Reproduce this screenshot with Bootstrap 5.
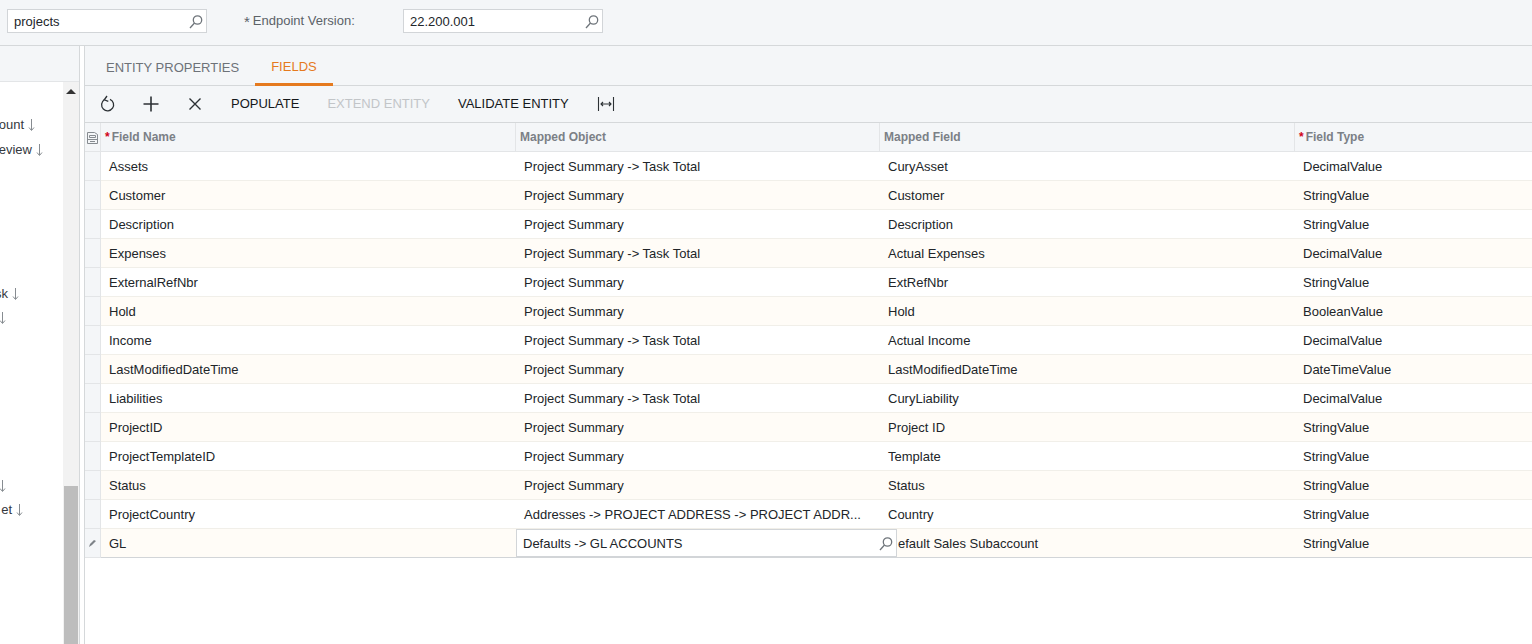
<!DOCTYPE html>
<html lang="en"><head><meta charset="utf-8"><title>Fields</title>
<link href="https://cdn.jsdelivr.net/npm/bootstrap@5.3.0/dist/css/bootstrap.min.css" rel="stylesheet">
<style>
html,body{height:644px;overflow:hidden}
body{font-family:"Liberation Sans",Arial,sans-serif;font-size:13px;color:#22262a;background:#fff}
.topbar{height:46px;background:#f4f6f8;border-bottom:1px solid #d5d8da;padding:9px 0 0 7px}
.lookup{height:24px;background:#fff;border:1px solid #d2d5d8;width:200px;padding:1px 6px 0;line-height:22px}
.lookup svg{width:16px;height:16px;margin-right:-4px}
.ver-label{color:#5b6268;width:196px;padding-left:37px;line-height:23px}
.ver-label i{font-style:normal;margin-right:3px;font-size:15px;vertical-align:-2px}
.mainrow{height:598px}
.leftpane{width:80px;border-right:1px solid #d5d8da;flex:none}
.lefthead{height:36px;background:#f4f6f8;border-bottom:1px solid #e3e5e7}
.leftbody{height:562px}
.treecol{width:63px;padding-top:31px}
.treerow{height:24px;line-height:24px;white-space:nowrap;display:flex;justify-content:flex-end;align-items:center;gap:4px;color:#34393e}
.treerow svg{flex:none;display:block}
.w35{width:35px}.w43{width:43px;margin-top:1px}.w19{width:19px}.w6{width:6px}.w23{width:23px}
.spacer-a{height:120px}.spacer-b{height:144px}
.track{width:16px;background:#f2f2f2;padding-top:404px;position:relative}
.track-up{position:absolute;left:3px;top:7px;width:0;height:0;border-left:5px solid transparent;border-right:5px solid transparent;border-bottom:5px solid #333}
.thumb{height:158px;margin:0 1px;background:#bdbdbd}
.rightpane{margin-left:4px;border-left:1px solid #d5d8da;flex:1;min-width:0}
.tabbar{height:40px;background:#f4f6f8;border-bottom:1px solid #d5d8da;padding-left:5px}
.tabitem{height:40px;line-height:43px;padding:0 16px;color:#6d7278;font-size:13px}
.tabitem.on{color:#e57a1e;border-bottom:3px solid #e57a1e;line-height:41px}
.toolbar{height:37px;background:#f4f6f8;border-bottom:1px solid #d5d8da;padding-left:14px}
.toolbar svg{display:block}
.gap25{margin-right:25px}.gap27{margin-right:27px}.gap28{margin-right:28px}
.tbtn{font-size:13px;color:#15181b}
.tbtn.off{color:#c2c5c8}
.gridwrap{width:1447px}
.fieldgrid{table-layout:fixed;width:1447px;margin:0;border-collapse:separate;border-spacing:0;--bs-table-bg:transparent}
.fieldgrid th{height:29px;padding:0 0 0 4px;background:#f4f6f8;border-bottom:1px solid #e3e5e7;border-right:1px solid #e3e5e7;font-weight:700;font-size:12px;color:#7b8086;vertical-align:middle}
.fieldgrid th:last-child{border-right:0}
.fieldgrid td{height:29px;padding:1px 8px 0;border-bottom:1px solid #f1efe9;vertical-align:middle;white-space:nowrap;overflow:hidden}
.fieldgrid tr:nth-child(even) td{background:#fffcf7}
.fieldgrid td.ind,.fieldgrid tr:nth-child(even) td.ind{background:#f4f6f8;border-right:1px solid #e3e5e7;border-bottom:1px solid #e3e5e7;padding:0}
.fieldgrid th.ind{padding:0;text-align:center}
.fieldgrid tr:last-child td{border-bottom:1px solid #d2d5d8}
.req{color:#d0021b;margin-right:2px}
.editcell{position:relative;overflow:visible!important;padding:0!important}
.editor{position:absolute;left:0;top:0;width:381px;height:29px;background:#fff;border:1px solid #d2d5d8;border-bottom-width:2px;padding:1px 6px 0;line-height:26px;z-index:2}
.editor svg{width:16px;height:16px;margin-right:-4px}
.clipfield{padding-left:18px!important}
</style></head><body>
<svg width="0" height="0" class="d-none"><defs><symbol id="arw" viewBox="0 0 7 12"><path d="M3.500 0v11M1 8.500 3.500 11.500 6 8.500" fill="none" stroke="#878c91" stroke-width="1"/></symbol></defs></svg>
<div class="topbar d-flex align-items-start">
  <div class="lookup d-flex justify-content-between align-items-center"><span>projects</span><svg viewBox="0 0 16 16" fill="none" stroke="#6f757b" stroke-width="1.3"><circle cx="9.5" cy="6" r="4.2"/><path d="M6.5 9 2 14"/></svg></div>
  <div class="ver-label"><i>*</i>Endpoint Version:</div>
  <div class="lookup d-flex justify-content-between align-items-center"><span>22.200.001</span><svg viewBox="0 0 16 16" fill="none" stroke="#6f757b" stroke-width="1.3"><circle cx="9.5" cy="6" r="4.2"/><path d="M6.5 9 2 14"/></svg></div>
</div>
<div class="mainrow d-flex">
  <div class="leftpane">
    <div class="lefthead"></div>
    <div class="leftbody d-flex">
      <div class="treecol">
        <div class="treerow w35">ount<svg width="7" height="12"><use href="#arw"/></svg></div>
        <div class="treerow w43">eview<svg width="7" height="12"><use href="#arw"/></svg></div>
        <div class="spacer-a"></div>
        <div class="treerow w19">sk<svg width="7" height="12"><use href="#arw"/></svg></div>
        <div class="treerow w6"><svg width="7" height="12"><use href="#arw"/></svg></div>
        <div class="spacer-b"></div>
        <div class="treerow w6"><svg width="7" height="12"><use href="#arw"/></svg></div>
        <div class="treerow w23">et<svg width="7" height="12"><use href="#arw"/></svg></div>
      </div>
      <div class="track"><div class="track-up"></div><div class="thumb"></div></div>
    </div>
  </div>
  <div class="rightpane">
    <div class="tabbar d-flex">
      <div class="tabitem">ENTITY PROPERTIES</div>
      <div class="tabitem on">FIELDS</div>
    </div>
    <div class="toolbar d-flex align-items-center">
      <svg width="18" height="18" viewBox="0 0 18 18" fill="none" stroke="#2c3135" stroke-width="1.3" class="gap25"><path d="M5.300 4.800A6 6 0 1 0 11 4.300"/><path d="M8 1 5.300 4.800 9.300 6.300"/></svg>
      <svg width="18" height="18" viewBox="0 0 18 18" fill="none" stroke="#2c3135" stroke-width="1.6" class="gap27"><path d="M9 1.500v15M1.500 9h15"/></svg>
      <svg width="16" height="16" viewBox="0 0 16 16" fill="none" stroke="#2c3135" stroke-width="1.4" class="gap28"><path d="M2.500 2.500l11 11M13.500 2.500l-11 11"/></svg>
      <span class="tbtn gap28">POPULATE</span>
      <span class="tbtn off gap28">EXTEND ENTITY</span>
      <span class="tbtn gap28">VALIDATE ENTITY</span>
      <svg width="18" height="16" viewBox="0 0 18 16" fill="none" stroke="#2c3135" stroke-width="1.1"><path d="M1.500 1v14M16.500 1v14M4 8h10M6 6 4 8l2 2M12 6l2 2-2 2"/></svg>
    </div>
    <div class="gridwrap">
    <table class="table fieldgrid">
      <colgroup><col style="width:16px"><col style="width:415px"><col style="width:364px"><col style="width:415px"><col style="width:237px"></colgroup>
      <thead><tr>
        <th class="ind"><svg width="11" height="12" viewBox="0 0 11 12" fill="none" stroke="#868b90"><path d="M.5 11.500V.5h7l3 2v9z"/><path d="M2.500 3.500h6v2h-6zM.5 7.500h10M3 9.500h5"/></svg></th>
        <th><span class="req">*</span>Field Name</th><th>Mapped Object</th><th>Mapped Field</th><th><span class="req">*</span>Field Type</th>
      </tr></thead>
      <tbody>
        <tr><td class="ind"></td><td>Assets</td><td>Project Summary -&gt; Task Total</td><td>CuryAsset</td><td>DecimalValue</td></tr>
        <tr><td class="ind"></td><td>Customer</td><td>Project Summary</td><td>Customer</td><td>StringValue</td></tr>
        <tr><td class="ind"></td><td>Description</td><td>Project Summary</td><td>Description</td><td>StringValue</td></tr>
        <tr><td class="ind"></td><td>Expenses</td><td>Project Summary -&gt; Task Total</td><td>Actual Expenses</td><td>DecimalValue</td></tr>
        <tr><td class="ind"></td><td>ExternalRefNbr</td><td>Project Summary</td><td>ExtRefNbr</td><td>StringValue</td></tr>
        <tr><td class="ind"></td><td>Hold</td><td>Project Summary</td><td>Hold</td><td>BooleanValue</td></tr>
        <tr><td class="ind"></td><td>Income</td><td>Project Summary -&gt; Task Total</td><td>Actual Income</td><td>DecimalValue</td></tr>
        <tr><td class="ind"></td><td>LastModifiedDateTime</td><td>Project Summary</td><td>LastModifiedDateTime</td><td>DateTimeValue</td></tr>
        <tr><td class="ind"></td><td>Liabilities</td><td>Project Summary -&gt; Task Total</td><td>CuryLiability</td><td>DecimalValue</td></tr>
        <tr><td class="ind"></td><td>ProjectID</td><td>Project Summary</td><td>Project ID</td><td>StringValue</td></tr>
        <tr><td class="ind"></td><td>ProjectTemplateID</td><td>Project Summary</td><td>Template</td><td>StringValue</td></tr>
        <tr><td class="ind"></td><td>Status</td><td>Project Summary</td><td>Status</td><td>StringValue</td></tr>
        <tr><td class="ind"></td><td>ProjectCountry</td><td>Addresses -&gt; PROJECT ADDRESS -&gt; PROJECT ADDR...</td><td>Country</td><td>StringValue</td></tr>
        <tr><td class="ind"><svg width="10" height="10" viewBox="0 0 10 10" class="d-block mx-auto" fill="#7d8287"><path d="M1 9l1-3 4-4 2 1-4 4z"/></svg></td><td>GL</td>
          <td class="editcell"><div class="editor d-flex justify-content-between align-items-center"><span>Defaults -&gt; GL ACCOUNTS</span><svg viewBox="0 0 16 16" fill="none" stroke="#6f757b" stroke-width="1.3"><circle cx="9.5" cy="6" r="4.2"/><path d="M6.5 9 2 14"/></svg></div></td>
          <td class="clipfield">efault Sales Subaccount</td><td>StringValue</td></tr>
      </tbody>
    </table>
    </div>
  </div>
</div>
</body></html>
